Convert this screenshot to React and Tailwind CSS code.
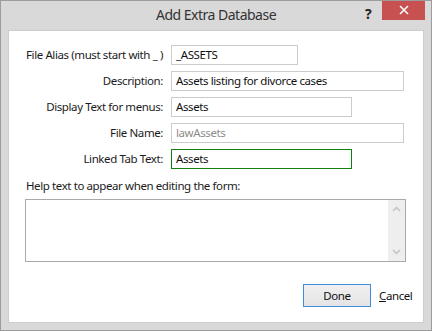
import React from "react";

const font = { fontFamily: '"Noto Sans", "Open Sans", sans-serif' };

function Row({ label, width, value, muted, active }) {
  return (
    <div className="flex items-center h-[20px]">
      <div className="w-[155px] text-right pr-[1px] text-[11.5px] tracking-[-0.4px] text-[#1b1b1b] leading-none whitespace-nowrap">{label}</div>
      <div
        className={`ml-[7px] h-[20px] flex items-center px-[4px] text-[11.5px] tracking-[-0.4px] leading-none bg-white border ${
          active ? "border-[#118011]" : "border-[#cccccc]"
        } ${muted ? "text-[#8c8c8c]" : "text-[#111111]"}`}
        style={{ width }}
      >
        {value}
      </div>
    </div>
  );
}

export default function App() {
  return (
    <div
      className="w-[432px] h-[331px] border border-[#9c9c9c] bg-[#d9d9d9] flex flex-col overflow-hidden"
      style={font}
    >
      <div className="h-[29px] relative flex items-center justify-center shrink-0">
        <span className="text-[14px] tracking-[-0.5px] text-[#333333] mt-[-2px]">Add Extra Database</span>
        <span className="absolute left-[364px] top-[2px] text-[14px] font-bold text-[#222222]">?</span>
        <div className="absolute left-[381px] top-[-1px] w-[43px] h-[20px] bg-[#c75050] flex items-center justify-center">
          <svg width="10" height="10" viewBox="0 0 10 10">
            <path d="M1 1 L9 9 M9 1 L1 9" stroke="white" strokeWidth="1.6" />
          </svg>
        </div>
      </div>
      <div className="flex-1 mx-[7px] mb-[7px] bg-white border border-[#cdcdcd] flex flex-col pt-[14px]">
        <div className="flex flex-col gap-[6px]">
          <Row label="File Alias (must start with _ )" width={127} value="_ASSETS" />
          <Row label="Description:" width={233} value="Assets listing for divorce cases" />
          <Row label="Display Text for menus:" width={181} value="Assets" />
          <Row label="File Name:" width={233} value="lawAssets" muted />
          <Row label="Linked Tab Text:" width={181} value="Assets" active />
        </div>
        <div className="ml-[17px] mt-[8px] text-[11.5px] tracking-[-0.4px] text-[#1b1b1b]">Help text to appear when editing the form:</div>
        <div className="ml-[16px] mt-[5px] w-[381px] h-[63px] border border-[#a9a9a9] flex justify-end">
          <div className="w-[17px] h-full bg-[#eeeeee] flex flex-col items-center justify-between py-[6px]">
            <svg width="9" height="6" viewBox="0 0 9 6">
              <path d="M1 5 L4.5 1.5 L8 5" stroke="#c2c2c2" strokeWidth="1.5" fill="none" />
            </svg>
            <svg width="9" height="6" viewBox="0 0 9 6">
              <path d="M1 1 L4.5 4.5 L8 1" stroke="#c2c2c2" strokeWidth="1.5" fill="none" />
            </svg>
          </div>
        </div>
        <div className="flex items-center mt-[22px]">
          <button className="ml-[294px] w-[68px] h-[23px] border border-[#3c8fdc] bg-gradient-to-b from-[#f0f0f0] to-[#e4e4e4] text-[11.5px] tracking-[-0.4px] text-[#111111] leading-none">
            Done
          </button>
          <span className="ml-[8px] text-[11.5px] tracking-[-0.4px] text-[#111111]">
            <span className="underline">C</span>ancel
          </span>
        </div>
      </div>
    </div>
  );
}
